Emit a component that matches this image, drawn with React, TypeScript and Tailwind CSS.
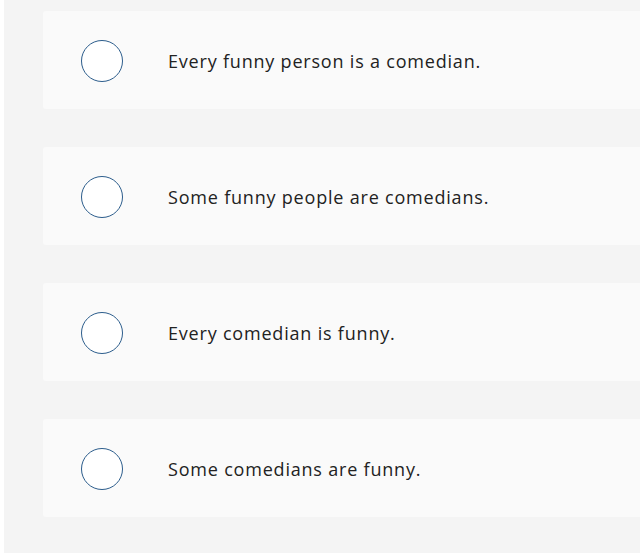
const options = [
  'Every funny person is a comedian.',
  'Some funny people are comedians.',
  'Every comedian is funny.',
  'Some comedians are funny.',
];

export default function App() {
  return (
    <div className="flex h-[553px] w-[640px] overflow-hidden bg-white">
      <div className="ml-[4px] flex flex-1 flex-col gap-[38px] bg-[#f4f4f4] pl-[39px] pt-[11px]">
        {options.map((text) => (
          <div
            key={text}
            className="flex h-[98px] w-[640px] shrink-0 items-center rounded-[3px] bg-[#fafafa]"
          >
            <div className="ml-[38px] mt-[2px] h-[42px] w-[42px] shrink-0 rounded-full border-[1.5px] border-[#2c5d8c] bg-white" />
            <span
              className="ml-[45px] mt-[2px] text-[18px] tracking-[0.8px] text-[#222]"
              style={{ fontFamily: '"Open Sans", sans-serif' }}
            >
              {text}
            </span>
          </div>
        ))}
      </div>
    </div>
  );
}
